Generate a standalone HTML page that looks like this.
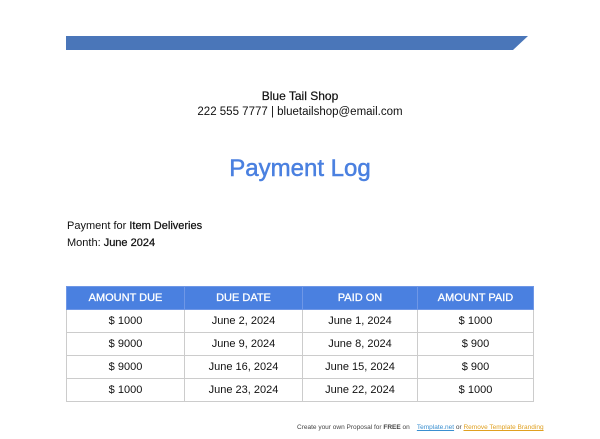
<html><head><style>
body{margin:0;width:600px;height:439px;background:#fff;font-family:"Liberation Sans",Arial,sans-serif;position:relative;overflow:hidden;color:#111}
.t{position:absolute;left:0;width:600px;text-align:center}
table{position:absolute;left:66px;top:286px;width:467px;border-collapse:collapse;font-size:11px;table-layout:fixed}
td,th{border:1px solid #ccc;text-align:center;height:23px;padding:0}
th{background:#4a80e0;color:#fff;font-weight:normal;border-color:#6f97e6;-webkit-text-stroke:0.3px #fff}
</style></head><body>
<svg style="position:absolute;left:0;top:0" width="600" height="60"><polygon points="66,36 528,36 513,50 66,50" fill="#4a76b9"/></svg>
<div class="t" style="top:89px;font-size:12px;-webkit-text-stroke:0.2px #111">Blue Tail Shop</div>
<div class="t" style="top:106px;font-size:11.5px">222 555 7777 | bluetailshop@email.com</div>
<div class="t" style="top:155px;font-size:24px;color:#4a80e0;-webkit-text-stroke:0.5px #4a80e0">Payment Log</div>
<div style="position:absolute;left:67px;top:218px;font-size:11px;line-height:17px">Payment for <span style="-webkit-text-stroke:0.25px #111">Item Deliveries</span><br>Month: <span style="-webkit-text-stroke:0.25px #111">June 2024</span></div>
<table>
<colgroup><col style="width:118px"><col style="width:118px"><col style="width:115px"><col style="width:116px"></colgroup>
<tr><th>AMOUNT DUE</th><th>DUE DATE</th><th>PAID ON</th><th>AMOUNT PAID</th></tr>
<tr><td>$ 1000</td><td>June 2, 2024</td><td>June 1, 2024</td><td>$ 1000</td></tr>
<tr><td>$ 9000</td><td>June 9, 2024</td><td>June 8, 2024</td><td>$ 900</td></tr>
<tr><td>$ 9000</td><td>June 16, 2024</td><td>June 15, 2024</td><td>$ 900</td></tr>
<tr><td>$ 1000</td><td>June 23, 2024</td><td>June 22, 2024</td><td>$ 1000</td></tr>
</table>
<div style="position:absolute;left:297px;top:424px;font-size:6.5px;color:#444;white-space:nowrap">Create your own Proposal for <b>FREE</b> on &nbsp;&nbsp; <span style="color:#3a8fd0;text-decoration:underline">Template.net</span> or <span style="color:#e0a020;text-decoration:underline">Remove Template Branding</span></div>
</body></html>
